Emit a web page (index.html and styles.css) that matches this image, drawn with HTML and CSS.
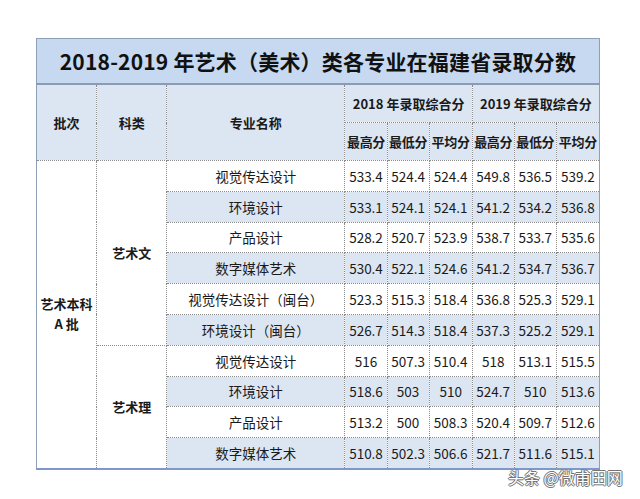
FILE: index.html
```html
<!DOCTYPE html>
<html lang="zh-CN">
<head>
<meta charset="utf-8">
<link rel="stylesheet" href="styles.css">
</head>
<body>
<div class="page">
  <table class="score">
    <colgroup>
      <col class="c-batch"><col class="c-cat"><col class="c-major">
      <col class="c-num"><col class="c-num"><col class="c-num3">
      <col class="c-num"><col class="c-num"><col class="c-num3">
    </colgroup>
    <thead>
      <tr class="title-row"><th colspan="9" class="title">2018-2019 年艺术（美术）类各专业在福建省录取分数</th></tr>
      <tr class="head1">
        <th rowspan="2">批次</th>
        <th rowspan="2">科类</th>
        <th rowspan="2">专业名称</th>
        <th colspan="3">2018 年录取综合分</th>
        <th colspan="3">2019 年录取综合分</th>
      </tr>
      <tr class="head2">
        <th>最高分</th><th>最低分</th><th>平均分</th>
        <th>最高分</th><th>最低分</th><th>平均分</th>
      </tr>
    </thead>
    <tbody>
      <tr>
        <td rowspan="10" class="group">艺术本科<br>A 批</td>
        <td rowspan="6" class="group">艺术文</td>
        <td>视觉传达设计</td><td>533.4</td><td>524.4</td><td>524.4</td><td>549.8</td><td>536.5</td><td>539.2</td>
      </tr>
      <tr class="alt"><td>环境设计</td><td>533.1</td><td>524.1</td><td>524.1</td><td>541.2</td><td>534.2</td><td>536.8</td></tr>
      <tr><td>产品设计</td><td>528.2</td><td>520.7</td><td>523.9</td><td>538.7</td><td>533.7</td><td>535.6</td></tr>
      <tr class="alt"><td>数字媒体艺术</td><td>530.4</td><td>522.1</td><td>524.6</td><td>541.2</td><td>534.7</td><td>536.7</td></tr>
      <tr><td>视觉传达设计（闽台）</td><td>523.3</td><td>515.3</td><td>518.4</td><td>536.8</td><td>525.3</td><td>529.1</td></tr>
      <tr class="alt"><td>环境设计（闽台）</td><td>526.7</td><td>514.3</td><td>518.4</td><td>537.3</td><td>525.2</td><td>529.1</td></tr>
      <tr>
        <td rowspan="4" class="group">艺术理</td>
        <td>视觉传达设计</td><td>516</td><td>507.3</td><td>510.4</td><td>518</td><td>513.1</td><td>515.5</td>
      </tr>
      <tr class="alt"><td>环境设计</td><td>518.6</td><td>503</td><td>510</td><td>524.7</td><td>510</td><td>513.6</td></tr>
      <tr><td>产品设计</td><td>513.2</td><td>500</td><td>508.3</td><td>520.4</td><td>509.7</td><td>512.6</td></tr>
      <tr class="alt"><td>数字媒体艺术</td><td>510.8</td><td>502.3</td><td>506.6</td><td>521.7</td><td>511.6</td><td>515.1</td></tr>
    </tbody>
  </table>
  <div class="watermark">头条 @微甫田网</div>
</div>
</body>
</html>
```

FILE: styles.css
```css
html, body {
  margin: 0;
  padding: 0;
  background: #ffffff;
}
body {
  font-family: "Noto Sans CJK SC", "Noto Sans", sans-serif;
  color: #1a1a1a;
}
.page {
  position: relative;
  width: 640px;
  height: 499px;
  padding: 38px 0 0 36px;
  box-sizing: border-box;
}
.score {
  border-collapse: collapse;
  table-layout: fixed;
  width: 564px;
  border: 1px solid #8f9fb8;
  border-bottom: 2px solid #7f97c9;
}
.c-batch { width: 60px; }
.c-cat { width: 70px; }
.c-major { width: 178px; }
.c-num { width: 42px; }
.c-num3 { width: 43px; }
th, td {
  border: 1px dotted #8a8a8a;
  padding: 0;
  text-align: center;
  vertical-align: middle;
  white-space: nowrap;
  overflow: hidden;
}
.title-row .title {
  height: 44px;
  background: #c6d9f1;
  font-size: 21px;
  font-weight: 700;
  color: #111;
  border: 1px solid #8f9fb8;
  border-bottom: 2px solid #8c9bb3;
  letter-spacing: 0.2px;
}
.head1 th, .head2 th {
  background: #dce6f2;
  font-size: 13px;
  font-weight: 700;
  color: #1a1a1a;
}
.head1 th { height: 37px; }
.head2 th { height: 37px; letter-spacing: -0.3px; }
.head1 th[rowspan] { letter-spacing: 0; }
tbody td {
  height: 29.8px;
  font-size: 13.5px;
  background: #ffffff;
}
tbody tr.alt td {
  background: #dce6f2;
}
tbody td.group {
  background: #ffffff;
  font-weight: 700;
  font-size: 13px;
  line-height: 20px;
}
.watermark {
  position: absolute;
  left: 508px;
  top: 465px;
  font-size: 16px;
  color: #ffffff;
  letter-spacing: 0;
  text-shadow: 0 0 1px #666, 1px 0 0 #777, -1px 0 0 #777, 0 1px 0 #777, 0 -1px 0 #777;
}
```
